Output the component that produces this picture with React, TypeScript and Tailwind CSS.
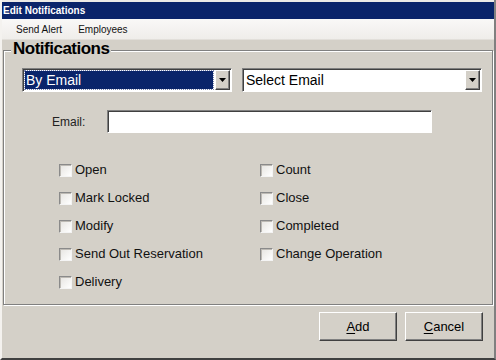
import React, { useState } from "react";

const LEFT_OPTS = ["Open", "Mark Locked", "Modify", "Send Out Reservation", "Delivery"];
const RIGHT_OPTS = ["Count", "Close", "Completed", "Change Operation"];

function ArrowButton() {
  return (
    <div className="w-[15px] h-[20px] shrink-0 bg-[#d4d0c8] border border-t-white border-l-white border-r-[#404040] border-b-[#404040] shadow-[inset_-1px_-1px_0_#808080] flex items-center justify-center">
      <svg width="7" height="4" viewBox="0 0 7 4">
        <path d="M0 0h7L3.5 4z" fill="#000" />
      </svg>
    </div>
  );
}

function Check({ label }: { label: string }) {
  const [on, setOn] = useState(false);
  return (
    <label className="flex items-center h-[28px] cursor-default select-none" onClick={() => setOn(!on)}>
      <span className="w-[13px] h-[13px] bg-gradient-to-br from-[#e6e4e0] to-white border border-t-[#8a8a8a] border-l-[#8a8a8a] border-r-[#f4f4f4] border-b-[#f4f4f4] shadow-[inset_1px_1px_0_#bdbab4] flex items-center justify-center">
        {on && (
          <svg width="7" height="7" viewBox="0 0 7 7">
            <path d="M0 3l2 2 5-5v2L2 7 0 5z" fill="#000" />
          </svg>
        )}
      </span>
      <span className="ml-[3px] text-[13px] text-[#111]">{label}</span>
    </label>
  );
}

export default function App() {
  return (
    <div
      className="w-[496px] h-[360px] bg-[#d4d0c8] flex flex-col border-l-2 border-l-[#f4f2ef] border-b-2 border-b-[#404040] border-r-2 border-r-[#808080] overflow-hidden"
      style={{ fontFamily: '"Liberation Sans", Arial, sans-serif' }}
    >
      <div className="pt-[2px] bg-[#eceae6]">
        <div className="h-[17px] bg-[#0a246a] text-white text-[10px] font-bold leading-[17px] pl-[1px]">
          Edit Notifications
        </div>
      </div>

      <div className="h-[21px] bg-gradient-to-b from-[#f9f8f7] to-[#efedea] flex items-center text-[10px] text-[#111] border-b border-b-[#e2dfda]">
        <span className="ml-[14px]">Send Alert</span>
        <span className="ml-[16px]">Employees</span>
      </div>

      {/* group box */}
      <div className="relative mx-[1px] mt-[10px] h-[255px] border border-[#808080] shadow-[inset_1px_1px_0_#fff,1px_1px_0_#fff] pl-[18px] pt-[17px]">
        <span className="absolute left-[7px] top-[-11px] px-[2px] h-[18px] bg-[#d4d0c8] text-[17px] font-bold tracking-[-0.5px] text-black leading-[18px]">
          Notifications
        </span>

        <div className="flex gap-[10px]">
          <div className="w-[210px] shrink-0 h-[24px] bg-white border border-t-[#808080] border-l-[#808080] border-r-white border-b-white shadow-[inset_1px_1px_0_#404040] flex items-center pl-[2px] pr-[1px]">
            <div className="flex-1 h-[18px] bg-[#0a246a] text-white text-[14px] leading-[18px] pl-[1px] mr-[2px] outline outline-1 outline-dotted outline-[#7a86b0]">
              By Email
            </div>
            <ArrowButton />
          </div>
          <div className="w-[240px] shrink-0 h-[24px] bg-white border border-t-[#808080] border-l-[#808080] border-r-white border-b-white shadow-[inset_1px_1px_0_#404040] flex items-center pl-[3px] pr-[1px]">
            <div className="flex-1 text-[14px] text-black leading-[18px]">Select Email</div>
            <ArrowButton />
          </div>
        </div>

        <div className="flex items-center mt-[18px]">
          <span className="ml-[30px] w-[55px] text-[12px] text-[#222]">Email:</span>
          <div className="w-[325px] shrink-0 h-[23px] bg-white border border-t-[#808080] border-l-[#808080] border-r-white border-b-white shadow-[inset_1px_1px_0_#404040]" />
        </div>

        <div className="flex mt-[23px]">
          <div className="ml-[37px] w-[201px] flex flex-col">
            {LEFT_OPTS.map((o) => (
              <Check key={o} label={o} />
            ))}
          </div>
          <div className="flex flex-col">
            {RIGHT_OPTS.map((o) => (
              <Check key={o} label={o} />
            ))}
          </div>
        </div>
      </div>

      <div className="flex justify-end gap-[8px] mt-[7px] pr-[11px]">
        {[
          { k: "A", rest: "dd" },
          { k: "C", rest: "ancel" },
        ].map((b) => (
          <button
            key={b.k}
            className="w-[78px] h-[29px] bg-[#d4d0c8] border border-t-white border-l-white border-r-[#404040] border-b-[#404040] shadow-[inset_-1px_-1px_0_#808080] text-[13px] text-black"
          >
            <span className="underline underline-offset-2">{b.k}</span>
            {b.rest}
          </button>
        ))}
      </div>
    </div>
  );
}
